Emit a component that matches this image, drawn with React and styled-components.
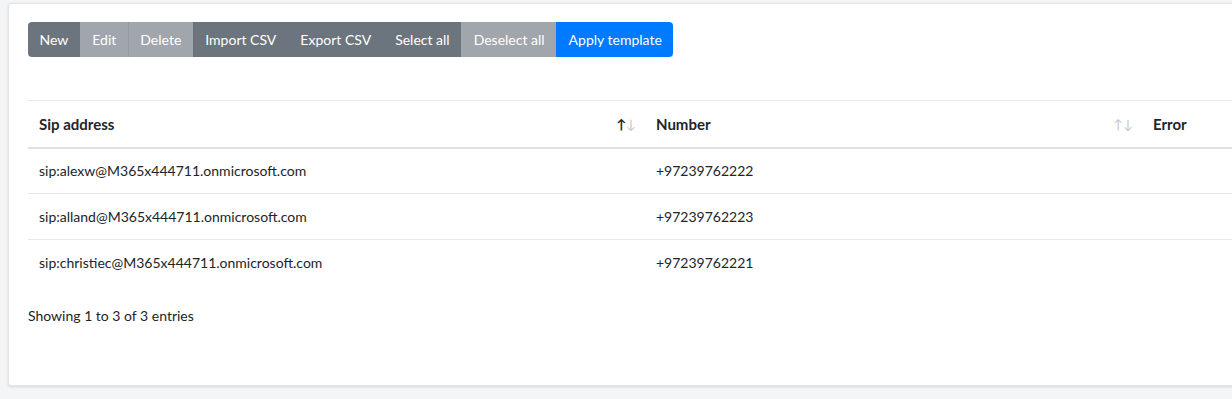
import React from 'react';
import styled, { createGlobalStyle } from 'styled-components';

const GlobalStyle = createGlobalStyle`
  html, body {
    margin: 0;
    padding: 0;
    background: #f4f5f7;
    overflow: hidden;
  }
  body {
    font-family: Lato, "Open Sans", sans-serif;
    color: #212529;
  }
`;

const Page = styled.div`
  padding: 3px 0 0 8px;
  height: 399px;
  box-sizing: border-box;
`;

const Card = styled.section`
  width: 1320px;
  height: 383px;
  box-sizing: border-box;
  background: #fff;
  border: 1px solid #e1e3e6;
  border-radius: 3px;
  box-shadow: 0 1px 3px rgba(0, 0, 0, 0.12);
  padding: 18px 19px 0 19px;
`;

const Toolbar = styled.div`
  display: inline-flex;
  border-radius: 4px;
  overflow: hidden;
`;

const ToolButton = styled.button`
  font-family: inherit;
  font-size: 14px;
  line-height: 21px;
  padding: 7px 11.5px;
  border: 0;
  color: #fff;
  background: ${p => (p.$variant === 'primary' ? '#007bff' : p.$disabled ? '#a0a6ab' : '#6c757d')};
  border-left: 1px solid ${p => (p.$disabled && p.$joined ? '#959ba0' : 'transparent')};
  cursor: pointer;
  &:first-child {
    border-left: 0;
  }
`;

const Table = styled.table`
  margin-top: 43px;
  width: 1260px;
  border-collapse: collapse;
  font-size: 14px;
`;

const HeadCell = styled.th`
  position: relative;
  text-align: left;
  font-weight: 700;
  font-size: 15px;
  height: 47px;
  padding: 0 11px;
  border-top: 1px solid #e6e8ea;
  border-bottom: 2px solid #dee2e6;
  width: ${p => p.$width || 'auto'};
  box-sizing: border-box;
`;

const SortIcon = styled.span`
  position: absolute;
  right: 9px;
  top: 50%;
  transform: translateY(-50%);
  display: flex;
  gap: 0;
  font-size: 13px;
  font-weight: 400;
`;

const Arrow = styled.span`
  color: ${p => (p.$active ? '#212529' : '#c4c7ca')};
  font-weight: ${p => (p.$active ? 700 : 400)};
`;

const Cell = styled.td`
  height: 46px;
  padding: 0 11px;
  box-sizing: border-box;
  border-top: ${p => (p.$first ? '0' : '1px solid #e6e8ea')};
`;

const Info = styled.div`
  margin-top: 21px;
  font-size: 14px;
`;

const rows = [
  { sip: 'sip:alexw@M365x444711.onmicrosoft.com', number: '+97239762222' },
  { sip: 'sip:alland@M365x444711.onmicrosoft.com', number: '+97239762223' },
  { sip: 'sip:christiec@M365x444711.onmicrosoft.com', number: '+97239762221' },
];

const buttons = [
  { label: 'New' },
  { label: 'Edit', disabled: true },
  { label: 'Delete', disabled: true, joined: true },
  { label: 'Import CSV' },
  { label: 'Export CSV' },
  { label: 'Select all' },
  { label: 'Deselect all', disabled: true },
  { label: 'Apply template', variant: 'primary' },
];

export default function App() {
  return (
    <Page>
      <GlobalStyle />
      <Card>
        <Toolbar>
          {buttons.map(b => (
            <ToolButton key={b.label} $disabled={b.disabled} $joined={b.joined} $variant={b.variant}>
              {b.label}
            </ToolButton>
          ))}
        </Toolbar>
        <Table>
          <thead>
            <tr>
              <HeadCell $width="617px">
                Sip address
                <SortIcon><Arrow $active>↑</Arrow><Arrow>↓</Arrow></SortIcon>
              </HeadCell>
              <HeadCell $width="497px">
                Number
                <SortIcon><Arrow>↑</Arrow><Arrow>↓</Arrow></SortIcon>
              </HeadCell>
              <HeadCell>Error</HeadCell>
            </tr>
          </thead>
          <tbody>
            {rows.map((r, i) => (
              <tr key={r.sip}>
                <Cell $first={i === 0}>{r.sip}</Cell>
                <Cell $first={i === 0}>{r.number}</Cell>
                <Cell $first={i === 0}></Cell>
              </tr>
            ))}
          </tbody>
        </Table>
        <Info>Showing 1 to 3 of 3 entries</Info>
      </Card>
    </Page>
  );
}
